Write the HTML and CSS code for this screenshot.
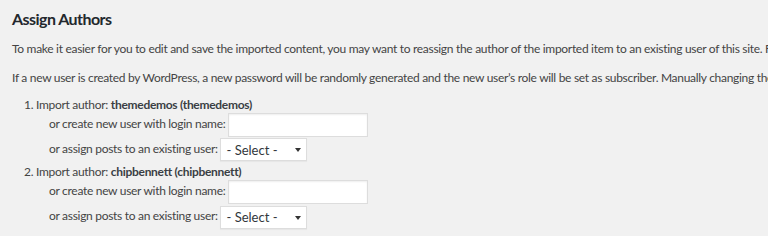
FILE: index.html
```html
<!doctype html>
<html lang="en">
	<head>
		<meta http-equiv="Content-Type" content="text/html; charset=utf-8">
		<title>Assign Authors</title>
		<link rel="stylesheet" href="styles.css">
	</head>
	<body>
	<div class="wrap">
		<h2>Assign Authors</h2>
		<p>To make it easier for you to edit and save the imported content, you may want to reassign the author of the imported item to an existing user of this site. For example, you may want to import all the entries as admins entries.</p>
		<p>If a new user is created by WordPress, a new password will be randomly generated and the new user&#8217;s role will be set as subscriber. Manually changing the new user&#8217;s details will be necessary.</p>
		<ol id="authors">
			<li>Import author: <strong>themedemos (themedemos)</strong><br>
				<div class="opts">
					or create new user with login name: <input type="text" class="login"><br>
					or assign posts to an existing user: <span class="sel"><select><option>- Select -</option></select></span>
				</div>
			</li>
			<li>Import author: <strong>chipbennett (chipbennett)</strong><br>
				<div class="opts">
					or create new user with login name: <input type="text" class="login"><br>
					or assign posts to an existing user: <span class="sel"><select><option>- Select -</option></select></span>
				</div>
			</li>
		</ol>
	</div>
	</body>
</html>
```

FILE: styles.css
```css
*{margin: 0;padding: 0;}
html,body{
	background: #f1f1f1;
	overflow: hidden;
}
body{
	color: #444;
	font-family: Lato, "Open Sans", sans-serif;
	font-size: 12px;
	letter-spacing: -0.3px;
	line-height: 18px;
	width: 1200px;
}
.wrap{
	padding: 8px 0 0 12px;
}
h2{
	color: #23282d;
	font-size: 16px;
	font-weight: 700;
	letter-spacing: -0.55px;
	line-height: 22px;
	margin-bottom: 10px;
}
p{
	white-space: nowrap;
	margin-bottom: 11px;
}
#authors{
	margin-left: 24px;
	margin-top: 5px;
}
#authors li{
	line-height: 14px;
	margin-bottom: 4px;
}
#authors strong{
	font-weight: 700;
	color: #3a3f44;
}
.opts{
	margin-left: 13px;
	line-height: 24px;
}
input.login{
	width: 138px;
	height: 22px;
	border: 1px solid #ddd;
	background: #fff;
	box-shadow: inset 0 1px 2px rgba(0,0,0,.07);
	vertical-align: middle;
}
.sel{
	position: relative;
	display: inline-block;
	vertical-align: middle;
}
.sel::after{
	content: "";
	position: absolute;
	right: 6px;
	top: 10px;
	border-left: 3px solid transparent;
	border-right: 3px solid transparent;
	border-top: 4px solid #333;
}
.sel select{
	display: block;
	-webkit-appearance: none;
	appearance: none;
	width: 87px;
	height: 23px;
	border: 1px solid #ddd;
	border-radius: 0;
	background: #fff;
	box-shadow: 0 1px 1px rgba(0,0,0,.04);
	color: #32373c;
	font-family: Lato, "Open Sans", sans-serif;
	font-size: 13px;
	padding: 0 5px;
}
```
